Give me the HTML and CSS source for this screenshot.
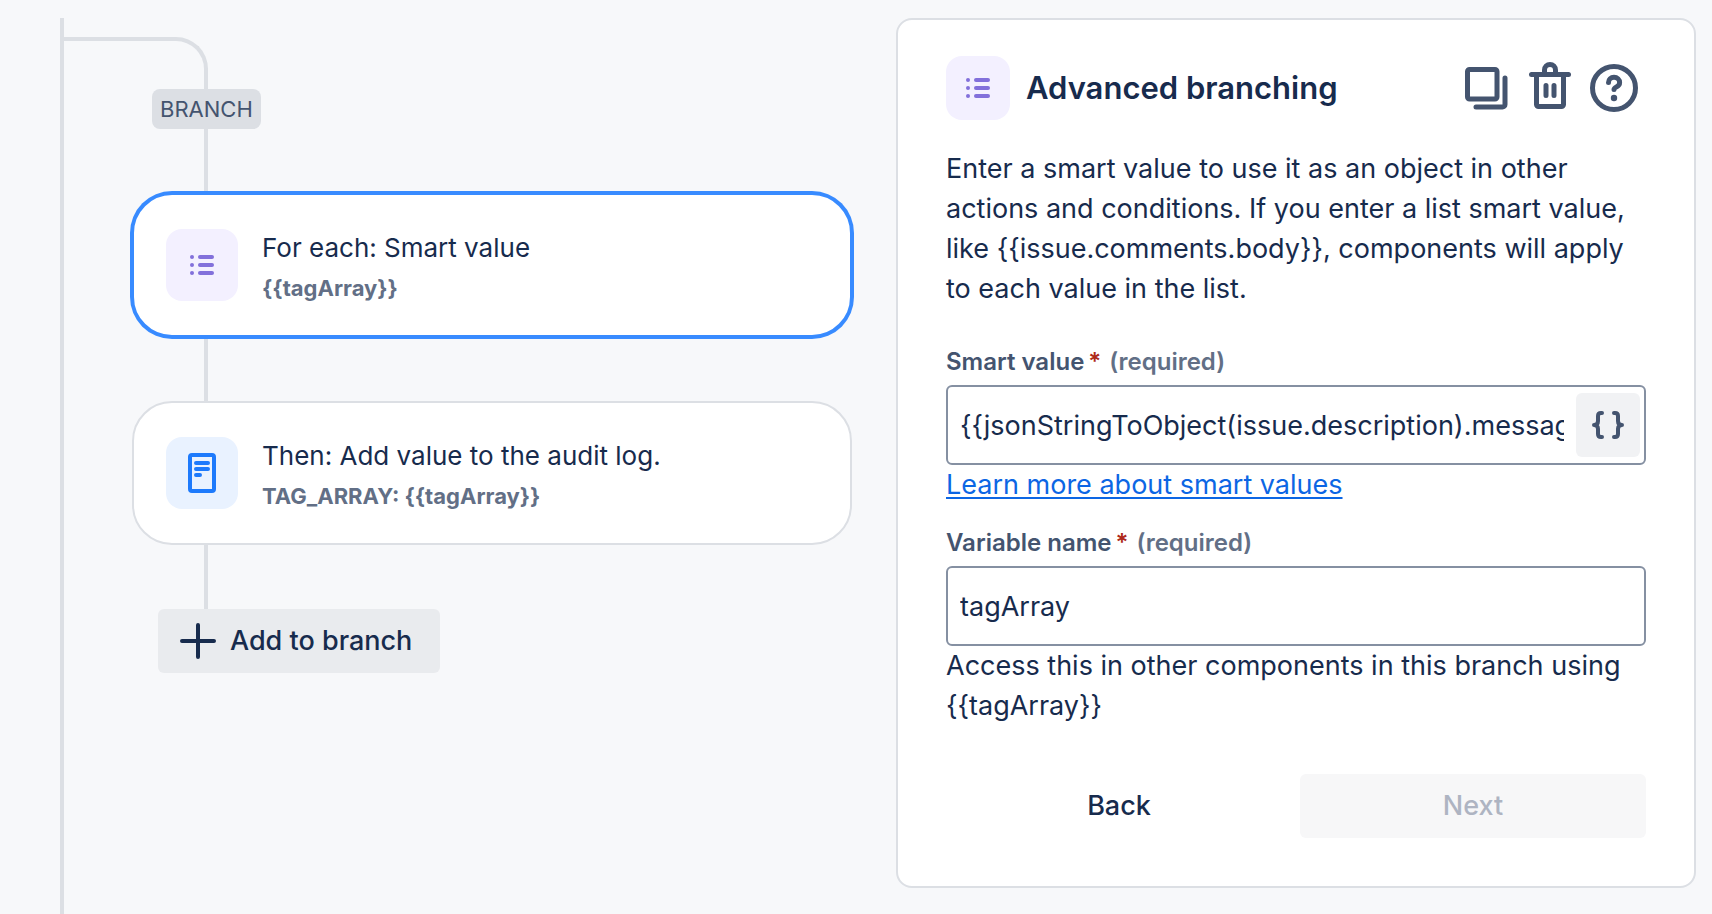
FILE: index.html
```
<!DOCTYPE html>
<html lang="en">
<head>
<meta charset="utf-8">
<meta name="viewport" content="width=device-width, initial-scale=1">
<title>Advanced branching</title>
<link rel="stylesheet" href="styles.css">
</head>
<body>
<div class="page">
  <main class="flow">
    <div class="flow-elbow"></div>
    <div class="branch">
      <span class="branch-tag">BRANCH</span>
      <div class="connector"></div>
      <article class="card card-selected">
        <span class="tile tile-purple">
          <svg class="icon" viewBox="0 0 48 48" aria-hidden="true"><g fill="#8270DB"><circle cx="14" cy="16" r="2"/><circle cx="14" cy="24" r="2"/><circle cx="14" cy="32" r="2"/><rect x="20" y="14" width="16" height="4" rx="2"/><rect x="20" y="22" width="16" height="4" rx="2"/><rect x="20" y="30" width="16" height="4" rx="2"/></g></svg>
        </span>
        <div class="card-text">
          <h2 class="card-title">For each: Smart value</h2>
          <p class="card-note">{{tagArray}}</p>
        </div>
      </article>
      <div class="connector"></div>
      <article class="card">
        <span class="tile tile-blue">
          <svg class="icon" viewBox="0 0 48 48" aria-hidden="true"><rect x="12" y="6" width="24" height="36" rx="2" fill="none" stroke="#1D7AFC" stroke-width="4"/><g stroke="#1D7AFC" stroke-width="4" stroke-linecap="round"><path d="M18 14h12M18 20h12M18 26h4"/></g></svg>
        </span>
        <div class="card-text">
          <h2 class="card-title">Then: Add value to the audit log.</h2>
          <p class="card-note">TAG_ARRAY: {{tagArray}}</p>
        </div>
      </article>
      <div class="connector"></div>
      <button class="button add-button" type="button">
        <svg class="icon-plus" viewBox="0 0 36 36" aria-hidden="true"><path d="M2 18h32M18 2v32" stroke="#172B4D" stroke-width="4" stroke-linecap="round"/></svg>
        Add to branch
      </button>
    </div>
  </main>

  <aside class="panel">
    <header class="panel-header">
      <span class="tile tile-small tile-purple">
        <svg class="icon" viewBox="0 0 48 48" aria-hidden="true"><g fill="#8270DB"><circle cx="14" cy="16" r="2"/><circle cx="14" cy="24" r="2"/><circle cx="14" cy="32" r="2"/><rect x="20" y="14" width="16" height="4" rx="2"/><rect x="20" y="22" width="16" height="4" rx="2"/><rect x="20" y="30" width="16" height="4" rx="2"/></g></svg>
      </span>
      <h1 class="panel-title">Advanced branching</h1>
      <div class="panel-actions">
        <button class="icon-button" type="button" aria-label="Duplicate">
          <svg viewBox="0 0 64 64" aria-hidden="true"><g fill="none" stroke="#44546F" stroke-width="5" stroke-linecap="round" stroke-linejoin="round"><rect x="13.500" y="13.500" width="29.500" height="29.500" rx="2"/><path d="M51 22v26.500a2.500 2.500 0 0 1-2.500 2.500H22"/></g></svg>
        </button>
        <button class="icon-button" type="button" aria-label="Delete">
          <svg viewBox="0 0 64 64" aria-hidden="true"><g fill="none" stroke="#44546F" stroke-width="5" stroke-linecap="round" stroke-linejoin="round"><path d="M13.500 18.500h37"/><path d="M26.500 17v-3a5.500 5.500 0 0 1 11 0v3"/><path d="M18.500 20v28.500a2 2 0 0 0 2 2h23a2 2 0 0 0 2-2V20"/><path d="M28 29.500v10M36 29.500v10"/></g></svg>
        </button>
        <button class="icon-button" type="button" aria-label="Help">
          <svg viewBox="0 0 64 64" aria-hidden="true"><g fill="none" stroke="#44546F" stroke-width="5" stroke-linecap="round" stroke-linejoin="round"><circle cx="32" cy="32" r="21.500"/><path d="M26.500 26.500c0-3 2.300-5.200 5.500-5.200s5.600 2.200 5.600 5.200c0 2-1 3.300-2.900 4.300-1.700.9-2.700 1.400-2.700 2.700"/></g><circle cx="32" cy="42" r="3.200" fill="#44546F"/></svg>
        </button>
      </div>
    </header>

    <p class="text description">Enter a smart value to use it as an object in other actions and conditions. If you enter a list smart value, like {{issue.comments.body}}, components will apply to each value in the list.</p>

    <form class="form">
      <div class="field">
        <label class="label" for="smart-value">Smart value<span class="star">*</span><span class="required">(required)</span></label>
        <div class="input-box">
          <input class="input" id="smart-value" type="text" value="{{jsonStringToObject(issue.description).messages}}">
          <button class="brace-button" type="button" aria-label="Insert smart value">
            <svg viewBox="0 0 64 64" aria-hidden="true"><g fill="none" stroke="#44546F" stroke-width="4" stroke-linecap="round" stroke-linejoin="round"><path d="M26 20h-1q-3 0-3 3v5q0 4-4 4q4 0 4 4v5q0 3 3 3h1"/><path d="M38 20h1q3 0 3 3v5q0 4 4 4q-4 0-4 4v5q0 3-3 3h-1"/></g></svg>
          </button>
        </div>
        <a class="text link" href="#">Learn more about smart values</a>
      </div>
      <div class="field">
        <label class="label" for="variable-name">Variable name<span class="star">*</span><span class="required">(required)</span></label>
        <div class="input-box">
          <input class="input" id="variable-name" type="text" value="tagArray">
        </div>
        <p class="text">Access this in other components in this branch using {{tagArray}}</p>
      </div>
      <div class="form-actions">
        <button class="button button-plain" type="button">Back</button>
        <button class="button button-disabled" type="submit" disabled>Next</button>
      </div>
    </form>
  </aside>
</div>
</body>
</html>
```
FILE: styles.css
```
* {
  box-sizing: border-box;
}

body {
  margin: 0;
  background: #f7f8fa;
  color: #172b4d;
  font-family: Inter, "Liberation Sans", sans-serif;
  font-size: 27px;
  line-height: 40px;
}

h1,
h2,
p {
  margin: 0;
}

button,
input {
  font: inherit;
  color: inherit;
}

button {
  border: 0;
  padding: 0;
  background: none;
}

svg {
  display: block;
}

.page {
  display: grid;
  grid-template-columns: minmax(0, 99fr) minmax(0, 100fr);
  gap: 44px;
  align-items: start;
  min-height: 100vh;
  padding: 18px 16px 0 60px;
}

/* Rule flow */

.flow {
  align-self: stretch;
  border-left: 4px solid #dcdfe4;
  padding-top: 19px;
}

.flow-elbow {
  width: 144px;
  height: 52px;
  border: solid #dcdfe4;
  border-width: 4px 4px 0 0;
  border-top-right-radius: 32px;
}

.branch {
  display: flex;
  flex-direction: column;
  align-items: flex-start;
  padding-left: 68px;
}

.branch-tag {
  margin-left: 20px;
  border-radius: 8px;
  padding: 0 8px;
  background: #dcdfe4;
  color: #44546f;
  font-size: 22px;
}

.connector {
  width: 4px;
  height: 64px;
  margin-left: 72px;
  background: #dcdfe4;
}

.card {
  position: relative;
  display: flex;
  align-items: center;
  gap: 24px;
  align-self: stretch;
  min-height: 144px;
  border: 2px solid #dcdfe4;
  border-radius: 40px;
  padding: 24px 32px;
  background: #fff;
}

.card-selected {
  border-color: #388bff;
  box-shadow: 0 0 0 2px #388bff;
}

.card-text {
  padding-top: 6px;
}

.card-title {
  font-size: 26px;
  font-weight: 400;
}

.card-note {
  color: #626f86;
  font-size: 22px;
  font-weight: 700;
}

.tile {
  display: grid;
  place-items: center;
  flex: none;
  width: 72px;
  height: 72px;
  border-radius: 16px;
}

.tile-small {
  width: 64px;
  height: 64px;
}

.tile-purple {
  background: #f3f0ff;
}

.tile-blue {
  background: #e9f2ff;
}

.icon {
  width: 48px;
  height: 48px;
}

.button {
  height: 64px;
  border-radius: 6px;
  font-weight: 500;
}

.add-button {
  display: flex;
  align-items: center;
  gap: 14px;
  margin-left: 26px;
  padding: 0 28px 0 22px;
  background: #e9ebee;
}

.icon-plus {
  width: 36px;
  height: 36px;
}

/* Configuration panel */

.panel {
  border: 2px solid #dcdfe4;
  border-radius: 16px;
  padding: 36px 48px 48px;
  background: #fff;
}

.panel-header {
  display: flex;
  align-items: center;
  gap: 16px;
}

.panel-title {
  flex: 1;
  font-size: 31px;
  font-weight: 600;
}

.panel-actions {
  display: flex;
}

.icon-button,
.icon-button svg,
.brace-button svg {
  width: 64px;
  height: 64px;
}

.text {
  font-size: 27px;
}

.description {
  margin-top: 29px;
}

.form {
  display: flex;
  flex-direction: column;
  gap: 21px;
  margin-top: 36px;
}

.field {
  display: flex;
  flex-direction: column;
  align-items: flex-start;
}

.label {
  margin-bottom: 7px;
  color: #44546f;
  font-size: 24px;
  font-weight: 600;
  line-height: 33px;
}

.star {
  margin: 0 8px 0 4px;
  color: #ae2a19;
}

.required {
  color: #626f86;
}

.input-box {
  display: flex;
  align-items: center;
  gap: 12px;
  align-self: stretch;
  height: 80px;
  border: 2px solid #8590a2;
  border-radius: 6px;
  padding: 0 4px 0 12px;
  background: #fff;
}

.input {
  flex: 1;
  min-width: 0;
  height: 64px;
  border: 0;
  padding: 0;
  background: none;
  outline: 0;
}

.brace-button {
  width: 64px;
  height: 64px;
  border-radius: 6px;
  background: #f1f2f4;
}

.link {
  color: #0c66e4;
  text-decoration: underline;
  text-decoration-thickness: 2px;
  text-underline-offset: 3px;
}

.form-actions {
  display: grid;
  grid-template-columns: 1fr 1fr;
  gap: 8px;
  margin-top: 27px;
}

.button-disabled {
  background: #f7f7f8;
  color: #aeb4c2;
}
```
